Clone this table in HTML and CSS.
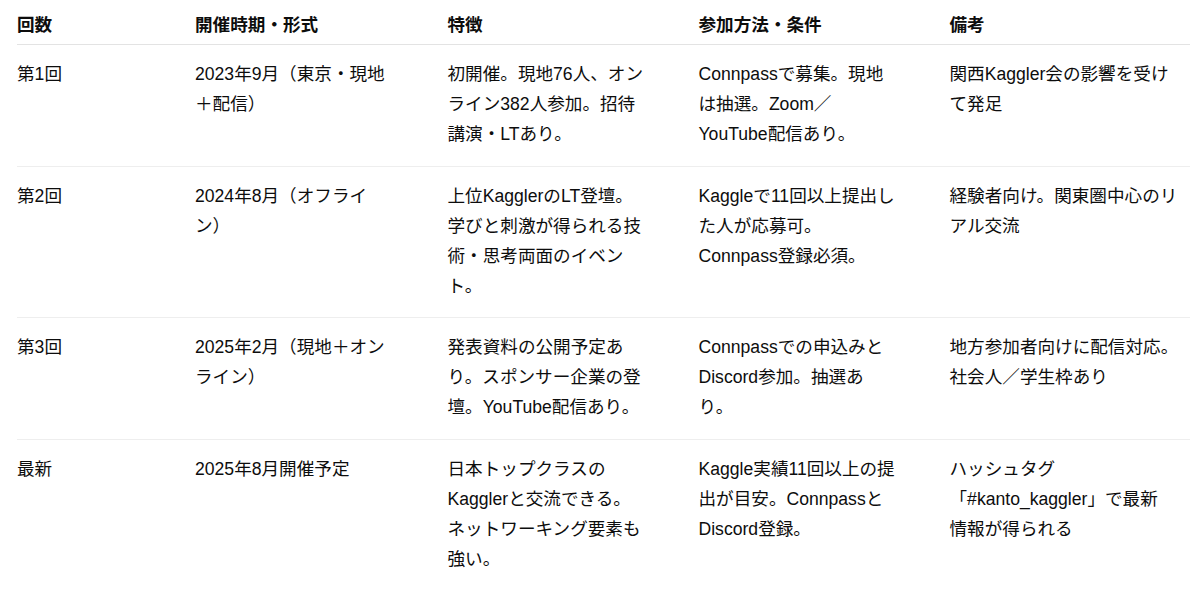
FILE: index.html
```html
<!DOCTYPE html>
<html lang="ja">
<head>
<meta charset="utf-8">
<title>関東Kaggler会</title>
<link rel="stylesheet" href="styles.css">
</head>
<body>
<div class="wrap">
<table class="events">
  <thead>
    <tr>
      <th class="c1">回数</th>
      <th class="c2">開催時期・形式</th>
      <th class="c3">特徴</th>
      <th class="c4">参加方法・条件</th>
      <th class="c5">備考</th>
    </tr>
  </thead>
  <tbody>
    <tr>
      <td>第1回</td>
      <td>2023年9月（東京・現地<br>＋配信）</td>
      <td>初開催。現地76人、オン<br>ライン382人参加。招待<br>講演・LTあり。</td>
      <td>Connpassで募集。現地<br>は抽選。Zoom／<br>YouTube配信あり。</td>
      <td>関西Kaggler会の影響を受け<br>て発足</td>
    </tr>
    <tr>
      <td>第2回</td>
      <td>2024年8月（オフライ<br>ン）</td>
      <td>上位KagglerのLT登壇。<br>学びと刺激が得られる技<br>術・思考両面のイベン<br>ト。</td>
      <td>Kaggleで11回以上提出し<br>た人が応募可。<br>Connpass登録必須。</td>
      <td>経験者向け。関東圏中心のリ<br>アル交流</td>
    </tr>
    <tr>
      <td>第3回</td>
      <td>2025年2月（現地＋オン<br>ライン）</td>
      <td>発表資料の公開予定あ<br>り。スポンサー企業の登<br>壇。YouTube配信あり。</td>
      <td>Connpassでの申込みと<br>Discord参加。抽選あ<br>り。</td>
      <td>地方参加者向けに配信対応。<br>社会人／学生枠あり</td>
    </tr>
    <tr>
      <td>最新</td>
      <td>2025年8月開催予定</td>
      <td>日本トップクラスの<br>Kagglerと交流できる。<br>ネットワーキング要素も<br>強い。</td>
      <td>Kaggle実績11回以上の提<br>出が目安。Connpassと<br>Discord登録。</td>
      <td>ハッシュタグ<br>「#kanto_kaggler」で最新<br>情報が得られる</td>
    </tr>
  </tbody>
</table>
</div>
</body>
</html>
```

FILE: styles.css
```css
html, body {
  margin: 0;
  padding: 0;
  background: #ffffff;
}

.wrap {
  padding-left: 17px;
}

.events {
  width: 1173px;
  table-layout: fixed;
  border-collapse: collapse;
  border-spacing: 0;
  font-family: "Liberation Sans", "Noto Sans CJK JP", sans-serif;
  font-size: 17.6px;
  line-height: 30px;
  color: #0d0d0d;
}

.events th,
.events td {
  box-sizing: border-box;
  text-align: left;
  vertical-align: top;
  padding: 14px 36px 16.5px 0;
  white-space: normal;
}

.events th {
  font-weight: 700;
  padding-top: 10px;
  padding-bottom: 4px;
  border-bottom: 1px solid #e3e3e3;
}

.events td {
  border-bottom: 1px solid #eeeeee;
}

.events tbody tr:last-child td {
  border-bottom: 0;
}

.events th:last-child,
.events td:last-child {
  padding-right: 0;
}

.c1 { width: 178px; }
.c2 { width: 252.5px; }
.c3 { width: 251px; }
.c4 { width: 251px; }
.c5 { width: 240.5px; }
```
